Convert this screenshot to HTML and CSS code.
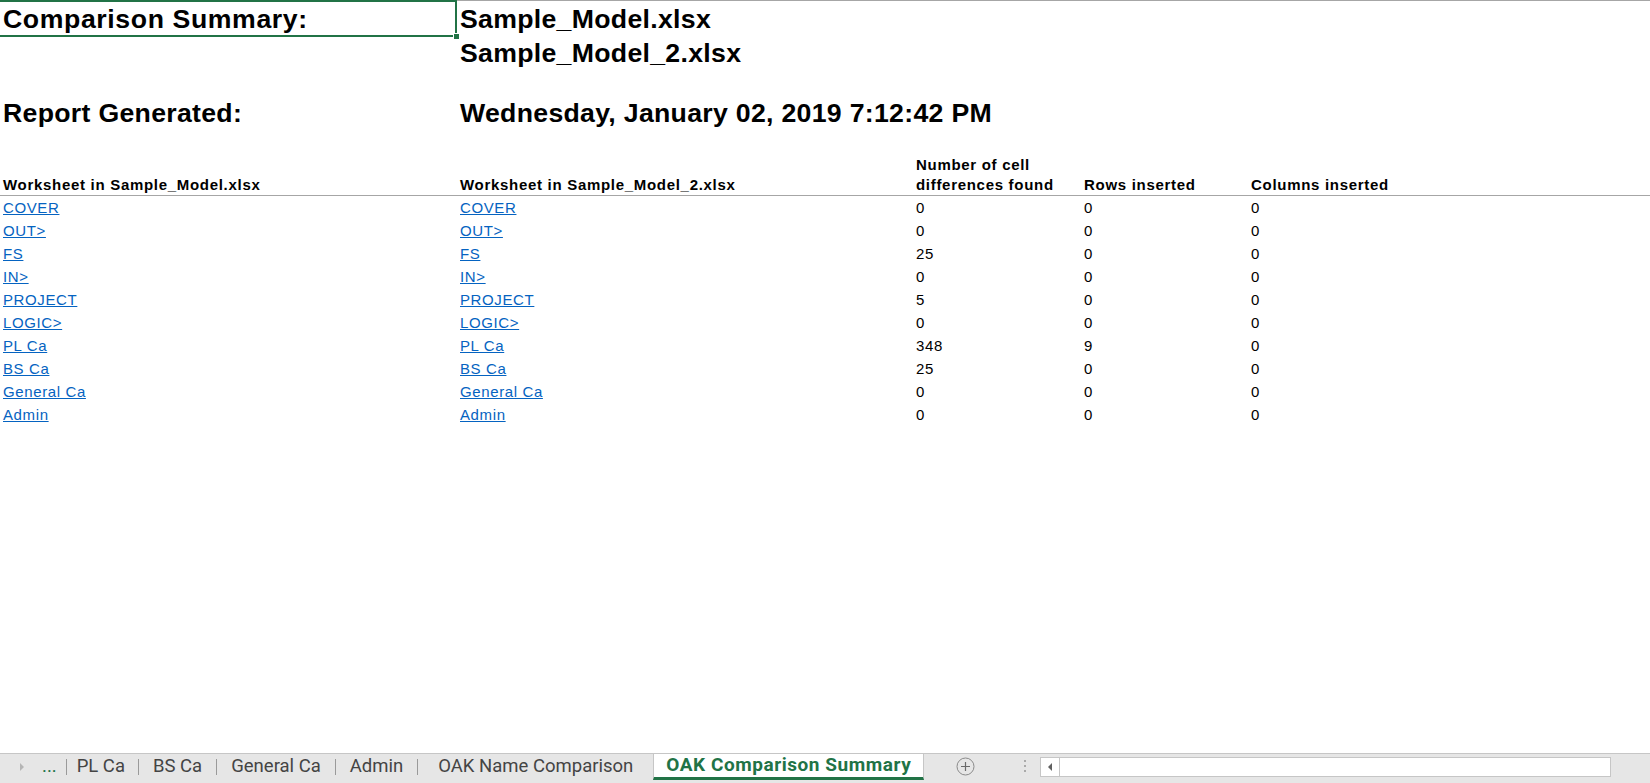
FILE: index.html
```html
<!DOCTYPE html>
<html>
<head>
<meta charset="utf-8">
<title>OAK Comparison Summary</title>
<link rel="stylesheet" href="styles.css">
</head>
<body>
<div class="app">
  <div class="sheet">
    <div class="selection"><span class="handle"></span></div>
    <div class="row r1">
      <div class="cell title wide-title">Comparison Summary:</div>
      <div class="cell title">Sample_Model.xlsx</div>
    </div>
    <div class="row r2">
      <div class="cell"></div>
      <div class="cell title">Sample_Model_2.xlsx</div>
    </div>
    <div class="row r3"></div>
    <div class="row r4">
      <div class="cell title">Report Generated:</div>
      <div class="cell title">Wednesday, January 02, 2019 7:12:42 PM</div>
    </div>
    <div class="row head">
      <div class="cell hd">Worksheet in Sample_Model.xlsx</div>
      <div class="cell hd">Worksheet in Sample_Model_2.xlsx</div>
      <div class="cell hd">Number of cell<br>differences found</div>
      <div class="cell hd">Rows inserted</div>
      <div class="cell hd">Columns inserted</div>
    </div>
    <div class="row data"><a class="cell link">COVER</a><a class="cell link">COVER</a><div class="cell num">0</div><div class="cell num">0</div><div class="cell num">0</div></div>
    <div class="row data"><a class="cell link">OUT&gt;</a><a class="cell link">OUT&gt;</a><div class="cell num">0</div><div class="cell num">0</div><div class="cell num">0</div></div>
    <div class="row data"><a class="cell link">FS</a><a class="cell link">FS</a><div class="cell num">25</div><div class="cell num">0</div><div class="cell num">0</div></div>
    <div class="row data"><a class="cell link">IN&gt;</a><a class="cell link">IN&gt;</a><div class="cell num">0</div><div class="cell num">0</div><div class="cell num">0</div></div>
    <div class="row data"><a class="cell link">PROJECT</a><a class="cell link">PROJECT</a><div class="cell num">5</div><div class="cell num">0</div><div class="cell num">0</div></div>
    <div class="row data"><a class="cell link">LOGIC&gt;</a><a class="cell link">LOGIC&gt;</a><div class="cell num">0</div><div class="cell num">0</div><div class="cell num">0</div></div>
    <div class="row data"><a class="cell link">PL Ca</a><a class="cell link">PL Ca</a><div class="cell num">348</div><div class="cell num">9</div><div class="cell num">0</div></div>
    <div class="row data"><a class="cell link">BS Ca</a><a class="cell link">BS Ca</a><div class="cell num">25</div><div class="cell num">0</div><div class="cell num">0</div></div>
    <div class="row data"><a class="cell link">General Ca</a><a class="cell link">General Ca</a><div class="cell num">0</div><div class="cell num">0</div><div class="cell num">0</div></div>
    <div class="row data"><a class="cell link">Admin</a><a class="cell link">Admin</a><div class="cell num">0</div><div class="cell num">0</div><div class="cell num">0</div></div>
  </div>
  <div class="tabbar">
    <div class="nav"><span class="arrow"></span></div>
    <div class="tab more">...</div>
    <span class="sep"></span>
    <div class="tab first">PL Ca</div>
    <span class="sep"></span>
    <div class="tab">BS Ca</div>
    <span class="sep"></span>
    <div class="tab">General Ca</div>
    <span class="sep"></span>
    <div class="tab">Admin</div>
    <span class="sep"></span>
    <div class="tab wide">OAK Name Comparison</div>
    <div class="tab active">OAK Comparison Summary</div>
    <div class="add">
      <svg width="19" height="19" viewBox="0 0 19 19"><circle cx="9.5" cy="9.5" r="8.5" fill="none" stroke="#8a8a8a" stroke-width="1"/><path d="M9.5 5v9M5 9.5h9" stroke="#6a6a6a" stroke-width="1.2"/></svg>
    </div>
    <div class="grip"><span></span><span></span><span></span></div>
    <div class="hscroll">
      <div class="sbtn"><span class="larrow"></span></div>
      <div class="track"></div>
    </div>
  </div>
</div>
</body>
</html>
```
FILE: styles.css
```css
html, body {
  margin: 0;
  padding: 0;
  background: #ffffff;
}
.app {
  width: 1650px;
  height: 783px;
  display: flex;
  flex-direction: column;
  overflow: hidden;
  font-family: "Liberation Sans", Arial, sans-serif;
  color: #000;
}
.sheet {
  position: relative;
  flex: 1;
  border-top: 1px solid #a6a6a6;
  box-sizing: border-box;
}
.selection {
  position: absolute;
  left: -2px;
  top: -1px;
  width: 455px;
  height: 33px;
  border: 2px solid #217346;
  pointer-events: none;
}
.handle {
  position: absolute;
  right: -5px;
  bottom: -5px;
  width: 5px;
  height: 5px;
  background: #217346;
  border: 1px solid #fff;
}
.row {
  display: grid;
  grid-template-columns: 457px 456px 168px 167px 1fr;
  align-items: end;
}
.cell {
  padding-left: 3px;
  white-space: nowrap;
  display: block;
}
.r1 { height: 35px; }
.r2 { height: 34px; }
.r3 { height: 23px; }
.r4 { height: 37px; }
.title {
  font-size: 26.67px;
  font-weight: bold;
  line-height: 1;
  letter-spacing: 0.3px;
  padding-bottom: 3px;
}
.title.wide-title { letter-spacing: 0.6px; }
.head {
  height: 65px;
  border-bottom: 1px solid #a6a6a6;
}
.hd {
  font-size: 15px;
  font-weight: bold;
  line-height: 20px;
  letter-spacing: 0.7px;
}
.data { height: 23px; }
.link, .num {
  font-size: 15px;
  line-height: 17px;
  letter-spacing: 0.62px;
  padding-bottom: 3px;
}
.link {
  color: #0563c1;
  text-decoration: underline;
  justify-self: start;
}
.num { color: #000; }

/* tab bar */
.tabbar {
  height: 30px;
  flex: none;
  box-sizing: border-box;
  border-top: 1px solid #c6c6c6;
  background: #e6e6e6;
  display: flex;
  align-items: flex-start;
  font-family: Roboto, "Liberation Sans", sans-serif;
  font-size: 18.5px;
  color: #444;
}
.nav {
  width: 36px;
  height: 26px;
  display: flex;
  align-items: center;
  justify-content: flex-end;
  padding-right: 6px;
  box-sizing: border-box;
}
.arrow {
  width: 0;
  height: 0;
  border-top: 4px solid transparent;
  border-bottom: 4px solid transparent;
  border-left: 4px solid #b5b5b5;
  margin-right: 6px;
}
.tab {
  height: 26px;
  line-height: 24px;
  padding: 0 14px;
  white-space: nowrap;
}
.tab.more {
  color: #217346;
  padding: 0 9px 0 6px;
}
.tab.first { padding: 0 13px 0 10px; }
.tab.wide { padding: 0 20px 0 20px; }
.sep {
  width: 1px;
  height: 16px;
  margin-top: 5px;
  background: #9a9a9a;
}
.tab.active {
  background: #ffffff;
  color: #217346;
  font-weight: bold;
  font-size: 19px;
  letter-spacing: 0.55px;
  padding: 0 12px;
  height: 26px;
  box-sizing: border-box;
  border-left: 1px solid #c6c6c6;
  border-right: 1px solid #c6c6c6;
  border-bottom: 3px solid #217346;
  line-height: 22px;
}
.add {
  margin-left: 32px;
  margin-top: 3px;
  width: 19px;
  height: 19px;
}
.add svg { display: block; }
.grip {
  margin-left: 49px;
  margin-top: 6px;
  display: flex;
  flex-direction: column;
  gap: 3px;
}
.grip span {
  width: 2px;
  height: 2px;
  background: #aaaaaa;
}
.hscroll {
  margin-left: 14px;
  margin-top: 3px;
  width: 571px;
  height: 20px;
  box-sizing: border-box;
  border: 1px solid #c6c6c6;
  background: #fff;
  display: flex;
}
.sbtn {
  width: 18px;
  border-right: 1px solid #c6c6c6;
  display: flex;
  align-items: center;
  justify-content: center;
}
.larrow {
  width: 0;
  height: 0;
  border-top: 4px solid transparent;
  border-bottom: 4px solid transparent;
  border-right: 4px solid #606060;
}
.track { flex: 1; }
```
